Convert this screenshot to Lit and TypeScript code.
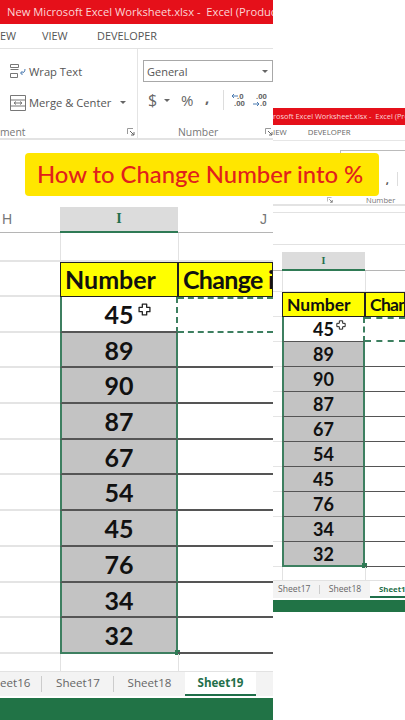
import { LitElement, html, css, svg } from "lit";
import { customElement } from "lit/decorators.js";

const VALUES = ["89", "90", "87", "67", "54", "45", "76", "34", "32"];

const cursor = svg`<path d="M4 1h4v3h3v4H8v3H4V8H1V4h3z" fill="#fff" stroke="#222" stroke-width="1.2" stroke-linejoin="round"/>`;
const launcher = html`<svg class="launch" viewBox="0 0 8 8" fill="none"><path d="M.5 6V.5H6" stroke="#999"/><path d="M3 3l4 4M7 4v3H4" stroke="#666"/></svg>`;

@customElement("app-root")
export class AppRoot extends LitElement {
  static styles = css`
    :host { display: block; width: 405px; height: 720px; overflow: hidden; background: #fff; position: relative; font-family: "Open Sans", "Liberation Sans", sans-serif; }
    .stage { display: flex; height: 720px; }
    .win { display: flex; flex-direction: column; overflow: hidden; flex: none; }
    .left { width: 273px; height: 720px; }
    .right { width: 132px; margin-top: 108px; height: 504px; }
    .title { background: #e5101a; color: #fbd5d5; white-space: nowrap; overflow: hidden; flex: none; }
    .left .title { height: 24px; line-height: 24px; font-size: 11.2px; padding-left: 7px; }
    .right .title { height: 17px; line-height: 17px; font-size: 7.4px; }
    .tabs { display: flex; white-space: nowrap; color: #555; background: #fff; overflow: hidden; flex: none; }
    .left .tabs { height: 24px; line-height: 24px; font-size: 10.9px; border-bottom: 1px solid #e2e2e2; }
    .left .tabs span:nth-child(1) { width: 42px; }
    .left .tabs span:nth-child(2) { width: 55px; }
    .right .tabs { height: 15px; line-height: 15px; font-size: 7.8px; border-bottom: 1px solid #e6e6e6; color: #666; gap: 21px; }
    .ribbon { display: flex; background: #fff; color: #555; border-bottom: 2px solid #e3e3e3; flex: none; box-sizing: border-box; height: 91px; }
    .grp { display: flex; flex-direction: column; border-right: 1px solid #e4e4e4; flex: none; }
    .align { width: 137px; }
    .align .line { display: flex; align-items: center; gap: 3px; height: 31px; padding-left: 10px; font-size: 11.2px; flex: none; }
    .align .line:first-child { margin-top: 7px; }
    .grp-label { font-size: 10.4px; color: #777; margin-top: auto; height: 18px; padding-top: 6px; box-sizing: border-box; line-height: 12px; display: flex; justify-content: space-between; align-items: center; flex: none; }
    .align .grp-label { padding-right: 2px; }
    .launch { width: 8px; height: 8px; flex: none; }
    .num { width: 135px; padding-left: 5px; box-sizing: border-box; border-right: none; }
    .select { width: 130px; height: 22px; box-sizing: border-box; margin-top: 11px; border: 1px solid #a8a8a8; font-size: 11px; line-height: 19px; padding-left: 3px; display: flex; justify-content: space-between; padding-right: 4px; align-items: center; flex: none; }
    .caret { width: 0; height: 0; border: 3px solid transparent; border-top-color: #666; border-bottom-width: 0; flex: none; }
    .fmt { display: flex; align-items: center; height: 28px; margin-top: 4px; padding-left: 5px; color: #666; flex: none; }
    .fmt .dollar { font-size: 16px; width: 16px; }
    .fmt .caret { margin-right: 10px; }
    .fmt .pct { font-size: 15px; width: 25px; padding-left: 1px; box-sizing: border-box; }
    .fmt .comma { font-size: 15px; font-weight: 700; width: 18px; line-height: 14px; margin-top: -6px; }
    .fmt .sep { width: 1px; height: 20px; background: #ddd; margin-right: 7px; }
    .dec { width: 15px; height: 16px; margin-right: 6px; flex: none; }
    .dec text { font: 700 7.5px "Open Sans", sans-serif; fill: #666; }
    .num .grp-label b { font-weight: 400; margin-left: 35px; }
    .formula { background: #fff; flex: none; border-bottom: 1px solid #e2e2e2; box-sizing: border-box; }
    .left .formula { height: 67px; border-bottom: 0; }
    .right .rib { height: 65px; display: flex; flex: none; box-sizing: border-box; border-bottom: 2px solid #e3e3e3; background: #fff; align-items: flex-end; color: #777; font-size: 7.6px; }
    .right .rib .launch { width: 6px; height: 6px; margin: 0 7px 1px 54px; }
    .rcol { flex: 1; height: 100%; display: flex; flex-direction: column; }
    .combo { height: 21px; margin-top: 9px; border: 1px solid #bbb; border-width: 1px 0 0 1px; flex: none; }
    .rfmt { display: flex; justify-content: flex-end; align-items: center; height: 14px; flex: none; color: #555; font-size: 11px; font-weight: 700; gap: 8px; }
    .rfmt i { width: 1px; height: 14px; background: #ddd; margin-right: 7px; }
    .rcol .nm { margin-top: auto; padding-left: 26px; line-height: 8px; }
    .right .f1 { height: 7px; }
    .right .f2 { height: 32px; margin-bottom: 7px; }
    .sheet { display: grid; flex: none; background: #fff; }
    .left .sheet { grid-template-columns: 60px 118px 95px; grid-template-rows: 26px 29px 35px repeat(10, 35.7px) 17px; }
    .right .sheet { grid-template-columns: 9px 83px 40px; grid-template-rows: 19px 21px 25px repeat(10, 25px) 13px; }
    .ch { background: #fff; color: #777; text-align: center; border-bottom: 1px solid #b5b5b5; box-sizing: border-box; font-family: "Liberation Sans", sans-serif; }
    .left .ch { line-height: 24px; font-size: 14px; }
    .right .ch { line-height: 17px; font-size: 10px; }
    .ch.on { background: #dcdcdc; color: #1f6f4a; font-weight: 700; border-bottom: 2px solid #2f7a55; font-family: "Liberation Serif", serif; }
    .ch.h { text-align: left; padding-left: 2px; }
    .ch.j { text-align: right; padding-right: 6px; }
    .c { box-sizing: border-box; font-weight: 700; color: #111; text-align: center; white-space: nowrap; overflow: hidden; position: relative; font-family: "Lato", "Open Sans", sans-serif; }
    .s { border-bottom: 2px solid #e4e4e4; }
    .right .s { border-bottom: 1px solid #e4e4e4; }
    .b { border-left: 1px solid #e2e2e2; }
    .left .hd { line-height: 33px; font-size: 25px; }
    .right .hd { line-height: 24px; font-size: 17.5px; }
    .left .v { line-height: 34px; font-size: 25px; }
    .right .v { line-height: 24px; font-size: 18px; }
    .y { background: #ffff00; text-align: left; border: 1px solid #222; overflow: hidden; padding-left: 4px; }
    .chg { letter-spacing: -0.7px; }
    .g { background: #c3c3c3; border-left: 2px solid #3d7f60; border-right: 2px solid #3d7f60; border-bottom: 2px solid #555; }
    .right .g { border-bottom: 1px solid #555; }
    .w { background: #fff; border-left: 2px solid #3d7f60; border-right: 2px dashed #3d7f60; border-bottom: 2px solid #555; }
    .right .w { border-bottom: 1px solid #555; }
    .g.last, .right .g.last { border-bottom: 2px solid #3d7f60; overflow: visible; }
    .d { border-bottom: 2px solid #555; }
    .right .d { border-bottom: 1px solid #555; }
    .d.first, .right .d.first { border-top: 2px dashed #3d7f60; border-bottom: 2px dashed #3d7f60; }
    .cur { position: absolute; top: 6px; left: 76px; width: 13px; height: 13px; }
    .right .cur { width: 10px; height: 10px; left: 52px; top: 3px; }
    .handle { position: absolute; right: -4px; bottom: -3px; width: 5px; height: 5px; background: #2f7a55; }
    .fill { flex: 1 1 0; min-height: 0; background: #fff; }
    .sheets { display: flex; background: #f3f3f3; flex: none; color: #666; align-items: stretch; overflow: hidden; white-space: nowrap; border-top: 1px solid #e2e2e2; box-sizing: border-box; }
    .left .sheets { height: 25px; font-size: 11.6px; line-height: 22px; }
    .right .sheets { height: 18px; font-size: 8.6px; line-height: 17px; }
    .sheets span { flex: none; text-align: center; box-sizing: border-box; }
    .sheets .sp { position: relative; }
    .sheets .sp::after { content: ""; position: absolute; right: 0; top: 4px; bottom: 4px; width: 1px; background: #ccc; }
    .sheets .act { background: #fff; color: #1f6f4a; font-weight: 700; border-bottom: 2px solid #1f6f4a; }
    .sheets .tight { text-align: left; overflow: hidden; }
    .right .sheets .act { font-size: 7.8px; }
    .status { background: #217346; flex: none; }
    .left .status { height: 22px; margin-top: 2px; }
    .right .status { height: 12px; margin-top: 2px; }
    .badge { position: absolute; left: 25px; top: 153px; width: 354px; height: 43px; border-radius: 4px; background: #ffe600; color: #e1211c; font: 500 23.8px/43px "Lato", "Open Sans", sans-serif; padding-left: 12px; box-sizing: border-box; white-space: nowrap; }
  `;

  private grid(headerH: string, headerJ: string) {
    return html`<div class="sheet">
      <div class="ch h">${headerH}</div><div class="ch on">I</div><div class="ch j">${headerJ}</div>
      <div class="c s"></div><div class="c s b"></div><div class="c s b"></div>
      <div class="c s"></div><div class="c hd y">Number</div><div class="c hd y chg">Change in %</div>
      <div class="c s"></div>
      <div class="c v w">45<svg class="cur" viewBox="0 0 12 12">${cursor}</svg></div>
      <div class="c d first"></div>
      ${VALUES.map((v, i) => {
        const last = i === VALUES.length - 1;
        return html`
          <div class="c s"></div>
          <div class="c v g ${last ? "last" : ""}">${v}${last ? html`<i class="handle"></i>` : ""}</div>
          <div class="c d"></div>`;
      })}
      <div class="c"></div><div class="c b"></div><div class="c b"></div>
    </div>`;
  }

  render() {
    return html`<div class="stage">
      <section class="win left">
        <div class="title">New Microsoft Excel Worksheet.xlsx -&nbsp; Excel (Product Activation Failed)</div>
        <div class="tabs"><span>EW</span><span>VIEW</span><span>DEVELOPER</span></div>
        <div class="ribbon">
          <div class="grp align">
            <div class="line">
              <svg width="16" height="15" viewBox="0 0 16 15" fill="none" stroke="#777"><path d="M.5.5h8v3h-8zM.5 5.5h8M.5 9.5h7v4h-7z"/><path d="M15 5c0 3-1.5 4-4 4M12.5 7 10.5 9l2 2" stroke="#4a7ab0"/></svg>
              Wrap Text
            </div>
            <div class="line">
              <svg width="16" height="16" viewBox="0 0 16 16" fill="none" stroke="#777"><path d="M.5.5h15v15H.5zM.5 5h15M.5 11h15M4 8h8M4 8l2-1.5M4 8l2 1.5M12 8l-2-1.5M12 8l-2 1.5"/></svg>
              Merge &amp; Center <i class="caret" style="margin-left:6px"></i>
            </div>
            <div class="grp-label"><span>ment</span>${launcher}</div>
          </div>
          <div class="grp num">
            <div class="select">General<i class="caret"></i></div>
            <div class="fmt">
              <span class="dollar">$</span><i class="caret"></i><span class="pct">%</span><span class="comma">,</span><i class="sep"></i>
              <svg class="dec" viewBox="0 0 15 16"><text x="6" y="7">.0</text><text x="3" y="14">.00</text><path d="M1 4h6M1 4l2-2M1 4l2 2" fill="none" stroke="#4a7ab0"/></svg>
              <svg class="dec" viewBox="0 0 15 16"><text x="4" y="7">.00</text><text x="8" y="14">.0</text><path d="M1 12h6M7 12l-2-2M7 12l-2 2" fill="none" stroke="#4a7ab0"/></svg>
            </div>
            <div class="grp-label"><b>Number</b>${launcher}</div>
          </div>
        </div>
        <div class="formula"></div>
        ${this.grid("H", "J")}
        <div class="fill"></div>
        <div class="sheets">
          <span class="sp" style="width:42px;text-align:right;padding-right:14px">eet16</span>
          <span class="sp" style="width:72px">Sheet17</span>
          <span style="width:71px">Sheet18</span>
          <span class="act" style="width:71px">Sheet19</span>
        </div>
        <div class="status"></div>
      </section>
      <section class="win right">
        <div class="title">rosoft Excel Worksheet.xlsx -&nbsp; Excel (Product)</div>
        <div class="tabs"><span>IEW</span><span>DEVELOPER</span></div>
        <div class="rib">
          ${launcher}
          <div class="rcol">
            <div class="combo"></div>
            <div class="rfmt"><span>,</span><i></i></div>
            <div class="nm">Number</div>
          </div>
        </div>
        <div class="formula f1"></div>
        <div class="formula f2"></div>
        ${this.grid("", "")}
        <div class="fill"></div>
        <div class="sheets">
          <span class="sp tight" style="width:47px;padding-left:5px">Sheet17</span>
          <span style="width:50px">Sheet18</span>
          <span class="act tight" style="width:35px;padding-left:9px">Sheet19</span>
        </div>
        <div class="status"></div>
      </section>
    </div>
    <div class="badge">How to Change Number into %</div>`;
  }
}
